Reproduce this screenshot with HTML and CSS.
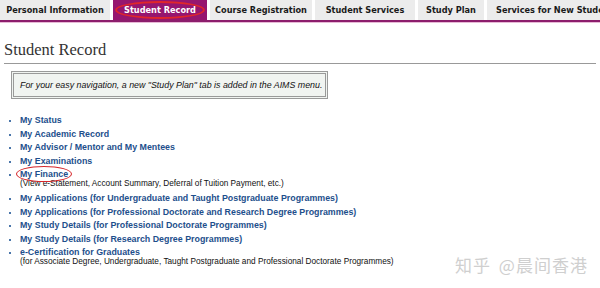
FILE: index.html
```html
<!DOCTYPE html>
<html lang="en">
<head>
    <meta charset="UTF-8">
    <title>Student Record</title>
    <link rel="stylesheet" href="styles.css">
</head>
<body>
    <div class="menu">
        <div class="tab tab-1">Personal Information</div>
        <div class="tab tab-active"><span class="circled">Student Record</span></div>
        <div class="tab tab-3">Course Registration</div>
        <div class="tab tab-4">Student Services</div>
        <div class="tab tab-5">Study Plan</div>
        <div class="tab tab-6">Services for New Students</div>
    </div>
    <div class="content">
        <h1 class="page-title">Student Record</h1>
        <div class="notice">For your easy navigation, a new "Study Plan" tab is added in the AIMS menu.</div>
        <ul class="links">
            <li><a>My Status</a></li>
            <li><a>My Academic Record</a></li>
            <li><a>My Advisor / Mentor and My Mentees</a></li>
            <li><a>My Examinations</a></li>
            <li><a class="circled-link">My Finance</a>
                <div class="note">(View e-Statement, Account Summary, Deferral of Tuition Payment, etc.)</div></li>
            <li><a>My Applications (for Undergraduate and Taught Postgraduate Programmes)</a></li>
            <li><a>My Applications (for Professional Doctorate and Research Degree Programmes)</a></li>
            <li><a>My Study Details (for Professional Doctorate Programmes)</a></li>
            <li><a>My Study Details (for Research Degree Programmes)</a></li>
            <li><a>e-Certification for Graduates</a>
                <div class="note">(for Associate Degree, Undergraduate, Taught Postgraduate and Professional Doctorate Programmes)</div></li>
        </ul>
    </div>
    <div class="watermark">知乎 @晨间香港</div>
</body>
</html>
```

FILE: styles.css
```css
body {
    margin: 0;
    background: #fff;
    font-family: "Liberation Sans", Arial, sans-serif;
    overflow: hidden;
    position: relative;
    height: 288px;
}
.menu {
    display: flex;
    height: 20px;
    background: #ececec;
    border-bottom: 2px solid #8c1d6c;
    box-shadow: 0 1px 0 #e7b9d6;
    overflow: hidden;
    white-space: nowrap;
}
.tab {
    flex: none;
    display: flex;
    align-items: center;
    justify-content: center;
    font-family: "DejaVu Sans", Verdana, sans-serif;
    font-weight: bold;
    font-size: 8.2px;
    color: #1a1a1a;
    background: #ececec;
    border-right: 3px solid #fff;
    box-sizing: border-box;
}
.tab-1 { width: 113px; }
.tab-active {
    width: 97px;
    background: #96166f;
    color: #fff;
    border-right-color: #fff;
}
.tab-3 { width: 105px; }
.tab-4 { width: 103px; }
.tab-5 { width: 69px; }
.tab-6 { width: 140px; justify-content: flex-start; padding-left: 9px; }
.circled {
    position: relative;
}
.circled::after {
    content: '';
    position: absolute;
    left: -9px;
    right: -9px;
    top: -4px;
    bottom: -4px;
    border: 2px solid #e0262b;
    border-radius: 50%;
}
.content {
    padding: 0 4px;
}
.page-title {
    margin: 18px 0 0;
    font-family: "Liberation Serif", "Times New Roman", serif;
    font-weight: normal;
    font-size: 16.5px;
    color: #333;
    padding-bottom: 3px;
    border-bottom: 1px solid #999;
}
.notice {
    margin: 7px 0 0 7px;
    width: 305px;
    padding: 6px 0 6px 6px;
    background: #f1f4f1;
    border: 3px double #9a9a9a;
    font-style: italic;
    font-size: 8.85px;
    color: #111;
}
.links {
    margin: 16px 0 0;
    padding: 0 0 0 16px;
    list-style: square;
    color: #4a76aa;
    font-size: 7px;
    line-height: 8px;
}
.links li {
    margin-bottom: 3.6px;
}
.links a {
    font-size: 8.85px;
    font-weight: bold;
    color: #1d4f8c;
    line-height: 10px;
}
.circled-link {
    position: relative;
}
.circled-link::after {
    content: '';
    position: absolute;
    left: -4px;
    right: -4px;
    top: -3px;
    bottom: -3px;
    border: 1.5px solid #d6282c;
    border-radius: 50%;
}
.note {
    font-size: 8.25px;
    color: #111;
    line-height: 10px;
}
.watermark {
    position: absolute;
    left: 455px;
    top: 252px;
    font-family: "Noto Sans CJK SC", sans-serif;
    font-size: 17px;
    color: #cfcfcf;
    letter-spacing: 1px;
    word-spacing: 3px;
}
```
